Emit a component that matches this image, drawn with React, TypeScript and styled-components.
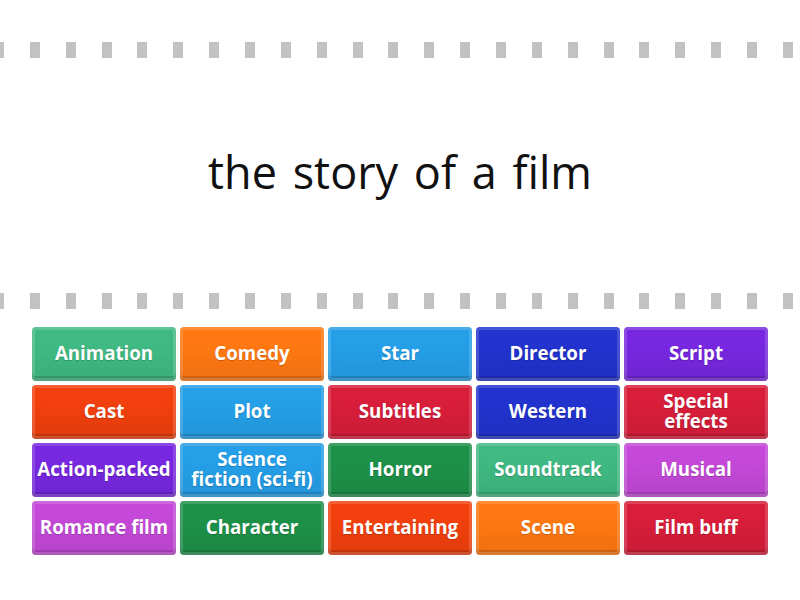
import React from "react";
import styled, { createGlobalStyle } from "styled-components";

const Global = createGlobalStyle`
  html, body { margin: 0; padding: 0; background: #ffffff; }
  body { font-family: "Open Sans", "Noto Sans", sans-serif; }
`;

const Page = styled.div`
  width: 800px;
  height: 600px;
  padding-top: 42px;
  box-sizing: border-box;
  display: flex;
  flex-direction: column;
  overflow: hidden;
`;

const DashRow = styled.div`
  height: 16px;
  display: flex;
  gap: 25.86px;
  margin-left: -6px;
  overflow: hidden;
`;

const Dash = styled.span`
  flex: 0 0 10px;
  height: 100%;
  background: #c2c2c2;
`;

const TitleArea = styled.div`
  height: 235px;
  display: flex;
  align-items: center;
  justify-content: center;
  padding-bottom: 8px;
  box-sizing: border-box;
`;

const Title = styled.h1`
  margin: 0;
  font-family: "Open Sans", sans-serif;
  font-weight: 400;
  font-size: 45px;
  word-spacing: 4px;
  color: #111111;
  line-height: 1;
`;

const Grid = styled.div`
  margin-top: 18px;
  padding-left: 32px;
  display: grid;
  grid-template-columns: repeat(5, 144px);
  grid-auto-rows: 54px;
  gap: 4px;
`;

const Tile = styled.div<{ $c: string }>`
  background: ${(p) => p.$c};
  border-radius: 4px;
  display: flex;
  align-items: center;
  justify-content: center;
  text-align: center;
  white-space: pre-line;
  color: #ffffff;
  font-family: "Open Sans", sans-serif;
  font-weight: 700;
  font-size: 18.7px;
  line-height: 20px;
  padding: 0 4px 3px;
  box-sizing: border-box;
  text-shadow: 0 1px 1px rgba(0, 0, 0, 0.2);
  box-shadow: inset 0 0 0 3px rgba(255, 255, 255, 0.16),
    inset 0 -5px 0 rgba(0, 0, 0, 0.14), inset 0 -30px 20px -10px rgba(0, 0, 0, 0.06);
`;

const GREEN = "#40ba82";
const ORANGE = "#ff7812";
const LBLUE = "#259fe8";
const BLUE = "#2233ce";
const PURPLE = "#7728e0";
const RED_OR = "#f2400e";
const RED = "#d81e3a";
const DGREEN = "#1e9149";
const MAGENTA = "#c449d8";

const items: [string, string][] = [
  ["Animation", GREEN],
  ["Comedy", ORANGE],
  ["Star", LBLUE],
  ["Director", BLUE],
  ["Script", PURPLE],
  ["Cast", RED_OR],
  ["Plot", LBLUE],
  ["Subtitles", RED],
  ["Western", BLUE],
  ["Special\neffects", RED],
  ["Action-packed", PURPLE],
  ["Science\nfiction (sci-fi)", LBLUE],
  ["Horror", DGREEN],
  ["Soundtrack", GREEN],
  ["Musical", MAGENTA],
  ["Romance film", MAGENTA],
  ["Character", DGREEN],
  ["Entertaining", RED_OR],
  ["Scene", ORANGE],
  ["Film buff", RED],
];

const dashes = Array.from({ length: 24 }, (_, i) => i);

export default function App() {
  return (
    <>
      <Global />
      <Page>
        <DashRow>
          {dashes.map((i) => (
            <Dash key={i} />
          ))}
        </DashRow>
        <TitleArea>
          <Title>the story of a film</Title>
        </TitleArea>
        <DashRow>
          {dashes.map((i) => (
            <Dash key={i} />
          ))}
        </DashRow>
        <Grid>
          {items.map(([t, c]) => (
            <Tile key={t} $c={c}>
              {t}
            </Tile>
          ))}
        </Grid>
      </Page>
    </>
  );
}
